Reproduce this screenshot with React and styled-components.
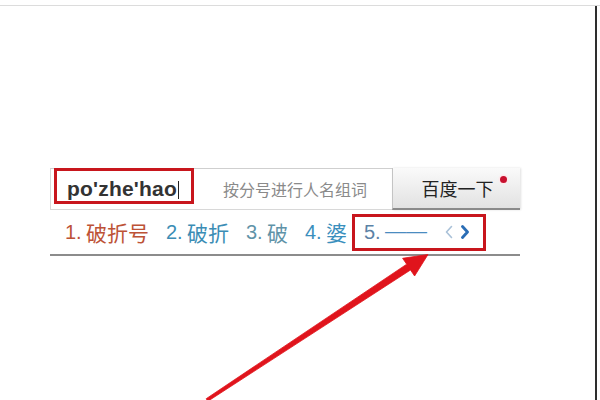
import React from "react";
import styled, { createGlobalStyle } from "styled-components";

const GlobalStyle = createGlobalStyle`
  html, body { margin: 0; padding: 0; background: #fff; }
  body { font-family: "Liberation Sans", Arial, sans-serif; }
`;

const Page = styled.div`
  position: relative;
  width: 600px;
  height: 400px;
  overflow: hidden;
  background: #fff;
  display: flex;
  flex-direction: column;
`;

const TopRule = styled.div`
  flex: none;
  height: 5px;
  border-bottom: 1px solid #dcdcdc;
`;

const Body = styled.div`
  flex: 1;
  display: flex;
`;

const Canvas = styled.div`
  flex: 1;
  padding: 162px 0 0 50px;
`;

const EdgeBar = styled.div`
  flex: none;
  width: 2px;
  margin-right: 3px;
  background: #2e2e2e;
`;

const Widget = styled.div`
  width: 470px;
  display: flex;
  flex-direction: column;
`;

const SearchRow = styled.div`
  display: flex;
  height: 42px;
`;

const InputBox = styled.div`
  box-sizing: border-box;
  width: 342px;
  height: 42px;
  padding-left: 3px;
  border: 1px solid #d8d8d8;
  border-top-color: #cfcfcf;
  border-right: none;
  display: flex;
  align-items: flex-start;
  background: #fff;
`;

const Mark = styled.div`
  box-sizing: border-box;
  border: 3px solid #c8161d;
`;

const TypedMark = styled(Mark)`
  width: 140px;
  height: 36px;
  margin-top: -1px;
  padding: 6px 0 0 10px;
  display: flex;
  align-items: flex-start;
`;

const Typed = styled.span`
  font-family: "Liberation Sans", Arial, sans-serif;
  font-weight: 700;
  font-size: 21px;
  line-height: 24px;
  color: #333;
  letter-spacing: 0.2px;
`;

const Caret = styled.span`
  width: 1px;
  height: 18px;
  margin: 4px 0 0 1px;
  background: #222;
`;

const Hint = styled.span`
  align-self: center;
  margin-left: 29px;
  font-family: "Noto Sans CJK SC", sans-serif;
  font-size: 16px;
  line-height: 20px;
  color: #8a8a8a;
`;

const SubmitButton = styled.div`
  position: relative;
  box-sizing: border-box;
  width: 128px;
  height: 42px;
  padding-left: 2px;
  border-left: 1px solid #c4c4c4;
  border-bottom: 2px solid #8a8a8a;
  background: linear-gradient(#fafafa, #e2e2e2);
  box-shadow: 1px 0 2px rgba(0, 0, 0, 0.12);
  display: flex;
  align-items: center;
  justify-content: center;
  font-family: "Noto Sans CJK SC", sans-serif;
  font-size: 18px;
  line-height: 22px;
  color: #222;
`;

const Dot = styled.span`
  position: absolute;
  left: 107px;
  top: 8px;
  width: 7px;
  height: 7px;
  border-radius: 50%;
  background: #c8102e;
  box-shadow: 0 0 0 1.5px #fde9ec;
`;

const CandidateRow = styled.div`
  box-sizing: border-box;
  height: 46px;
  padding-left: 15px;
  border-bottom: 2px solid #8c8c8c;
  display: flex;
  align-items: center;
  gap: 17px;
  background: #fff;
`;

const Candidate = styled.span`
  display: inline-flex;
  align-items: center;
  font-family: "Noto Sans CJK SC", sans-serif;
  font-size: 21px;
  line-height: 26px;
  color: ${(p) => p.$color};
`;

const Num = styled.span`
  display: inline-block;
  width: 21px;
  font-family: "Liberation Sans", Arial, sans-serif;
  font-size: 20px;
`;

const Dashes = styled.span`
  font-family: "Liberation Sans", Arial, sans-serif;
  font-size: 21px;
  color: #4a8cc0;
  position: relative;
  top: -1px;
`;

const PageMark = styled(Mark)`
  height: 37px;
  margin-left: -12px;
  padding: 0 14px 0 9px;
  display: flex;
  align-items: center;
`;

const Pager = styled.span`
  display: inline-flex;
  align-items: center;
  gap: 8px;
  margin-left: 18px;
`;

const Arrow = styled.svg`
  position: absolute;
  inset: 0;
  pointer-events: none;
`;

const Chevron = ({ dir, color, weight }) => (
  <svg width="8" height="16" viewBox="0 0 8 16">
    <path
      d={dir === "left" ? "M6.5 2.5 L1.5 8 L6.5 13.5" : "M1.5 2.5 L6.5 8 L1.5 13.5"}
      fill="none"
      stroke={color}
      strokeWidth={weight}
      strokeLinecap="round"
      strokeLinejoin="round"
    />
  </svg>
);

const candidates = [
  { n: "1.", word: "破折号", color: "#bd5236" },
  { n: "2.", word: "破折", color: "#3b8db5" },
  { n: "3.", word: "破", color: "#5f93a8" },
  { n: "4.", word: "婆", color: "#3a8fbd" },
];

export default function App() {
  return (
    <>
      <GlobalStyle />
      <Page>
        <TopRule />
        <Body>
          <Canvas>
            <Widget>
              <SearchRow>
                <InputBox>
                  <TypedMark>
                    <Typed>po'zhe'hao</Typed>
                    <Caret />
                  </TypedMark>
                  <Hint>按分号进行人名组词</Hint>
                </InputBox>
                <SubmitButton>
                  百度一下
                  <Dot />
                </SubmitButton>
              </SearchRow>
              <CandidateRow>
                {candidates.map((c) => (
                  <Candidate key={c.n} $color={c.color}>
                    <Num>{c.n}</Num>
                    {c.word}
                  </Candidate>
                ))}
                <PageMark>
                  <Candidate $color="#5b82a6">
                    <Num>5.</Num>
                    <Dashes>——</Dashes>
                  </Candidate>
                  <Pager>
                    <Chevron dir="left" color="#a9c1d8" weight={1.6} />
                    <Chevron dir="right" color="#2a6db5" weight={2.8} />
                  </Pager>
                </PageMark>
              </CandidateRow>
            </Widget>
          </Canvas>
          <EdgeBar />
        </Body>
        <Arrow width="600" height="400" viewBox="0 0 600 400">
          <polygon
            points="206.2,398.7 406.7,264.2 402.6,258.3 428,254.5 414.6,276 410.5,270 207.8,401.3"
            fill="#e0141c"
            stroke="#e0141c"
            strokeWidth="0.8"
            strokeLinejoin="round"
          />
        </Arrow>
      </Page>
    </>
  );
}
